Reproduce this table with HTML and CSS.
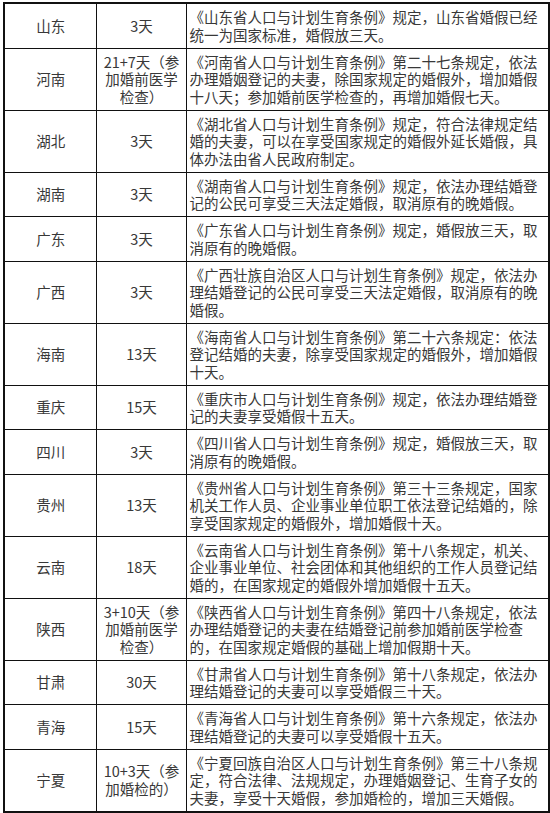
FILE: index.html
```html
<!DOCTYPE html>
<html lang="zh-CN">
<head>
<meta charset="utf-8">
<title>各省婚假</title>
<link rel="stylesheet" href="styles.css">
</head>
<body>
<table class="leave">
  <colgroup>
    <col class="c-prov">
    <col class="c-days">
    <col class="c-desc">
  </colgroup>
  <tbody>
    <tr><td class="prov">山东</td><td class="days">3天</td><td class="desc">《山东省人口与计划生育条例》规定，山东省婚假已经统一为国家标准，婚假放三天。</td></tr>
    <tr><td class="prov">河南</td><td class="days">21+7天（参加婚前医学检查）</td><td class="desc">《河南省人口与计划生育条例》第二十七条规定，依法办理婚姻登记的夫妻，除国家规定的婚假外，增加婚假十八天；参加婚前医学检查的，再增加婚假七天。</td></tr>
    <tr><td class="prov">湖北</td><td class="days">3天</td><td class="desc">《湖北省人口与计划生育条例》规定，符合法律规定结婚的夫妻，可以在享受国家规定的婚假外延长婚假，具体办法由省人民政府制定。</td></tr>
    <tr><td class="prov">湖南</td><td class="days">3天</td><td class="desc">《湖南省人口与计划生育条例》规定，依法办理结婚登记的公民可享受三天法定婚假，取消原有的晚婚假。</td></tr>
    <tr><td class="prov">广东</td><td class="days">3天</td><td class="desc">《广东省人口与计划生育条例》规定，婚假放三天，取消原有的晚婚假。</td></tr>
    <tr><td class="prov">广西</td><td class="days">3天</td><td class="desc">《广西壮族自治区人口与计划生育条例》规定，依法办理结婚登记的公民可享受三天法定婚假，取消原有的晚婚假。</td></tr>
    <tr><td class="prov">海南</td><td class="days">13天</td><td class="desc">《海南省人口与计划生育条例》第二十六条规定：依法登记结婚的夫妻，除享受国家规定的婚假外，增加婚假十天。</td></tr>
    <tr><td class="prov">重庆</td><td class="days">15天</td><td class="desc">《重庆市人口与计划生育条例》规定，依法办理结婚登记的夫妻享受婚假十五天。</td></tr>
    <tr><td class="prov">四川</td><td class="days">3天</td><td class="desc">《四川省人口与计划生育条例》规定，婚假放三天，取消原有的晚婚假。</td></tr>
    <tr><td class="prov">贵州</td><td class="days">13天</td><td class="desc">《贵州省人口与计划生育条例》第三十三条规定，国家机关工作人员、企业事业单位职工依法登记结婚的，除享受国家规定的婚假外，增加婚假十天。</td></tr>
    <tr><td class="prov">云南</td><td class="days">18天</td><td class="desc">《云南省人口与计划生育条例》第十八条规定，机关、企业事业单位、社会团体和其他组织的工作人员登记结婚的，在国家规定的婚假外增加婚假十五天。</td></tr>
    <tr><td class="prov">陕西</td><td class="days">3+10天（参加婚前医学检查）</td><td class="desc">《陕西省人口与计划生育条例》第四十八条规定，依法办理结婚登记的夫妻在结婚登记前参加婚前医学检查的，在国家规定婚假的基础上增加假期十天。</td></tr>
    <tr><td class="prov">甘肃</td><td class="days">30天</td><td class="desc">《甘肃省人口与计划生育条例》第十八条规定，依法办理结婚登记的夫妻可以享受婚假三十天。</td></tr>
    <tr><td class="prov">青海</td><td class="days">15天</td><td class="desc">《青海省人口与计划生育条例》第十六条规定，依法办理结婚登记的夫妻可以享受婚假十五天。</td></tr>
    <tr><td class="prov">宁夏</td><td class="days">10+3天（参加婚检的）</td><td class="desc">《宁夏回族自治区人口与计划生育条例》第三十八条规定，符合法律、法规规定，办理婚姻登记、生育子女的夫妻，享受十天婚假，参加婚检的，增加三天婚假。</td></tr>
  </tbody>
</table>
</body>
</html>
```

FILE: styles.css
```css
html, body {
  margin: 0;
  padding: 0;
  background: #ffffff;
}

body {
  padding: 2px 0 0 3px;
  font-family: "Noto Sans CJK SC", "Noto Sans", sans-serif;
  font-size: 14.5px;
  line-height: 17.5px;
  color: #383838;
}

.leave {
  border-collapse: collapse;
  table-layout: fixed;
  width: 545px;
  border: 2px solid #111111;
}

.c-prov { width: 92px; }
.c-days { width: 90px; }
.c-desc { width: 363px; }

.leave td {
  border: 1px solid #111111;
  padding: 4px 2px 4.5px 3px;
  vertical-align: middle;
  word-break: normal;
}

.prov, .days {
  text-align: center;
}

.days {
  padding-left: 4px;
  padding-right: 4px;
}

.desc {
  text-align: left;
}
```
